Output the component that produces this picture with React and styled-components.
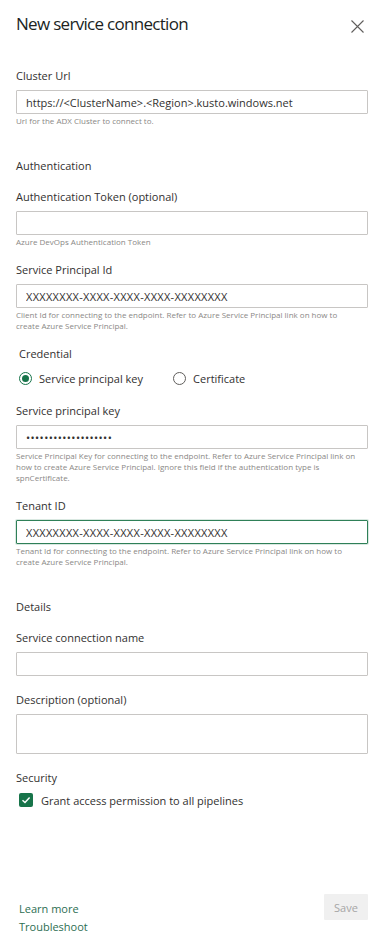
import React from "react";
import styled, { createGlobalStyle } from "styled-components";

const GlobalStyle = createGlobalStyle`
  * { box-sizing: border-box; }
  body {
    margin: 0;
    background: #ffffff;
    font-family: "Open Sans", "Noto Sans", sans-serif;
    color: #323130;
  }
`;

const green = "#17744a";

const Panel = styled.div`
  height: 942px;
  display: flex;
  flex-direction: column;
  padding: 0 16px;
  background: #fff;
`;

const Header = styled.header`
  display: flex;
  align-items: center;
  justify-content: space-between;
  padding-top: 10px;
`;

const Title = styled.h1`
  margin: 0;
  font-size: 17px;
  line-height: 28px;
  font-weight: 400;
  color: #201f1e;
  letter-spacing: -0.7px;
`;

const CloseButton = styled.button`
  border: 0;
  background: none;
  padding: 0;
  margin-right: 4px;
  margin-top: 4px;
  width: 13px;
  height: 13px;
  display: flex;
  cursor: pointer;
`;

const Body = styled.main`
  flex: 1;
  display: flex;
  flex-direction: column;
  padding-top: 30px;
`;

const Section = styled.section`
  display: flex;
  flex-direction: column;
  margin-top: ${(p) => (p.$first || p.$tight ? "0" : "17px")};
`;

const SectionTitle = styled.div`
  font-size: 11px;
  line-height: 16px;
  margin-bottom: 15px;
  color: #323130;
`;

const Field = styled.div`
  margin-bottom: ${(p) => (p.$bare ? "16px" : "15px")};
  padding-left: ${(p) => (p.$indent ? "3px" : "0")};
`;

const Label = styled.label`
  display: block;
  font-size: 11px;
  line-height: 16px;
  margin-bottom: 6px;
  color: #323130;
`;

const Input = styled.input`
  display: block;
  width: 100%;
  height: 24px;
  border: 1px solid ${(p) => (p.$focused ? "#2f8058" : "#c8c6c4")};
  box-shadow: ${(p) => (p.$focused ? "0 0 0 1px rgba(47,128,88,0.18)" : "none")};
  border-radius: 1px;
  padding: 0 9px;
  font-family: inherit;
  font-size: 11px;
  color: #323130;
  outline: none;
  background: #fff;
  letter-spacing: ${(p) => p.$spacing || "normal"};
`;

const TextArea = styled.textarea`
  display: block;
  width: 100%;
  height: 40px;
  border: 1px solid #c8c6c4;
  border-radius: 1px;
  resize: none;
  outline: none;
  font-family: inherit;
`;

const Help = styled.div`
  margin-top: 1px;
  max-width: 344px;
  font-size: 8px;
  line-height: 11px;
  color: #8a8886;
`;

const RadioRow = styled.div`
  display: flex;
  align-items: center;
  height: 20px;
  margin-top: 1px;
  gap: 30px;
`;

const RadioOption = styled.label`
  display: flex;
  align-items: center;
  gap: 7px;
  font-size: 11px;
  color: #323130;
`;

const RadioCircle = styled.span`
  width: 13px;
  height: 13px;
  border-radius: 50%;
  border: 1px solid ${(p) => (p.$checked ? green : "#605e5c")};
  display: flex;
  align-items: center;
  justify-content: center;
  &::after {
    content: "";
    width: 7px;
    height: 7px;
    border-radius: 50%;
    background: ${(p) => (p.$checked ? green : "transparent")};
  }
`;

const CheckRow = styled.label`
  display: flex;
  align-items: center;
  gap: 8px;
  height: 20px;
  margin-top: -11px;
  padding-left: 3px;
  font-size: 11px;
  color: #323130;
`;

const CheckBox = styled.span`
  width: 14px;
  height: 14px;
  border-radius: 2px;
  background: ${green};
  display: flex;
  align-items: center;
  justify-content: center;
`;

const Footer = styled.footer`
  display: flex;
  justify-content: space-between;
  align-items: flex-start;
  padding: 0 0 7px 3px;
`;

const Links = styled.div`
  display: flex;
  flex-direction: column;
  gap: 2px;
`;

const FooterLink = styled.a`
  font-size: 11px;
  line-height: 16px;
  color: #2d6e52;
  text-decoration: none;
`;

const SaveButton = styled.button`
  margin-top: -7px;
  width: 44px;
  height: 26px;
  border: 0;
  border-radius: 1px;
  background: #f0f0f0;
  color: #a6a6a6;
  font-family: inherit;
  font-size: 11px;
`;

const GUID = "XXXXXXXX-XXXX-XXXX-XXXX-XXXXXXXX";

export default function App() {
  return (
    <>
      <GlobalStyle />
      <Panel>
        <Header>
          <Title>New service connection</Title>
          <CloseButton aria-label="Close">
            <svg width="13" height="13" viewBox="0 0 13 13">
              <path d="M0.5 0.5 L12.5 12.5 M12.5 0.5 L0.5 12.5" stroke="#605e5c" strokeWidth="1.1" fill="none" />
            </svg>
          </CloseButton>
        </Header>

        <Body>
          <Section $first>
            <Field>
              <Label>Cluster Url</Label>
              <Input readOnly value="https://<ClusterName>.<Region>.kusto.windows.net" />
              <Help>Url for the ADX Cluster to connect to.</Help>
            </Field>
          </Section>

          <Section>
            <SectionTitle>Authentication</SectionTitle>
            <Field>
              <Label>Authentication Token (optional)</Label>
              <Input readOnly value="" />
              <Help>Azure DevOps Authentication Token</Help>
            </Field>
            <Field>
              <Label>Service Principal Id</Label>
              <Input readOnly value={GUID} $spacing="0.3px" />
              <Help>
                Client Id for connecting to the endpoint. Refer to Azure Service Principal link on how to
                create Azure Service Principal.
              </Help>
            </Field>
            <Field $indent>
              <Label as="div">Credential</Label>
              <RadioRow>
                <RadioOption>
                  <RadioCircle $checked />
                  Service principal key
                </RadioOption>
                <RadioOption>
                  <RadioCircle />
                  Certificate
                </RadioOption>
              </RadioRow>
            </Field>
            <Field>
              <Label>Service principal key</Label>
              <Input readOnly value={"•".repeat(19)} $spacing="0.4px" />
              <Help>
                Service Principal Key for connecting to the endpoint. Refer to Azure Service Principal link
                on how to create Azure Service Principal. Ignore this field if the authentication type is
                spnCertificate.
              </Help>
            </Field>
            <Field>
              <Label>Tenant ID</Label>
              <Input readOnly value={GUID} $spacing="0.3px" $focused />
              <Help>
                Tenant Id for connecting to the endpoint. Refer to Azure Service Principal link on how to
                create Azure Service Principal.
              </Help>
            </Field>
          </Section>

          <Section>
            <SectionTitle>Details</SectionTitle>
            <Field $bare>
              <Label>Service connection name</Label>
              <Input readOnly value="" />
            </Field>
            <Field $bare>
              <Label>Description (optional)</Label>
              <TextArea readOnly value="" />
            </Field>
          </Section>

          <Section $tight>
            <SectionTitle>Security</SectionTitle>
            <CheckRow>
              <CheckBox>
                <svg width="10" height="10" viewBox="0 0 10 10">
                  <path d="M1.5 5.2 L4 7.5 L8.6 2.6" stroke="#fff" strokeWidth="1.5" fill="none" />
                </svg>
              </CheckBox>
              Grant access permission to all pipelines
            </CheckRow>
          </Section>
        </Body>

        <Footer>
          <Links>
            <FooterLink href="#">Learn more</FooterLink>
            <FooterLink href="#">Troubleshoot</FooterLink>
          </Links>
          <SaveButton disabled>Save</SaveButton>
        </Footer>
      </Panel>
    </>
  );
}
